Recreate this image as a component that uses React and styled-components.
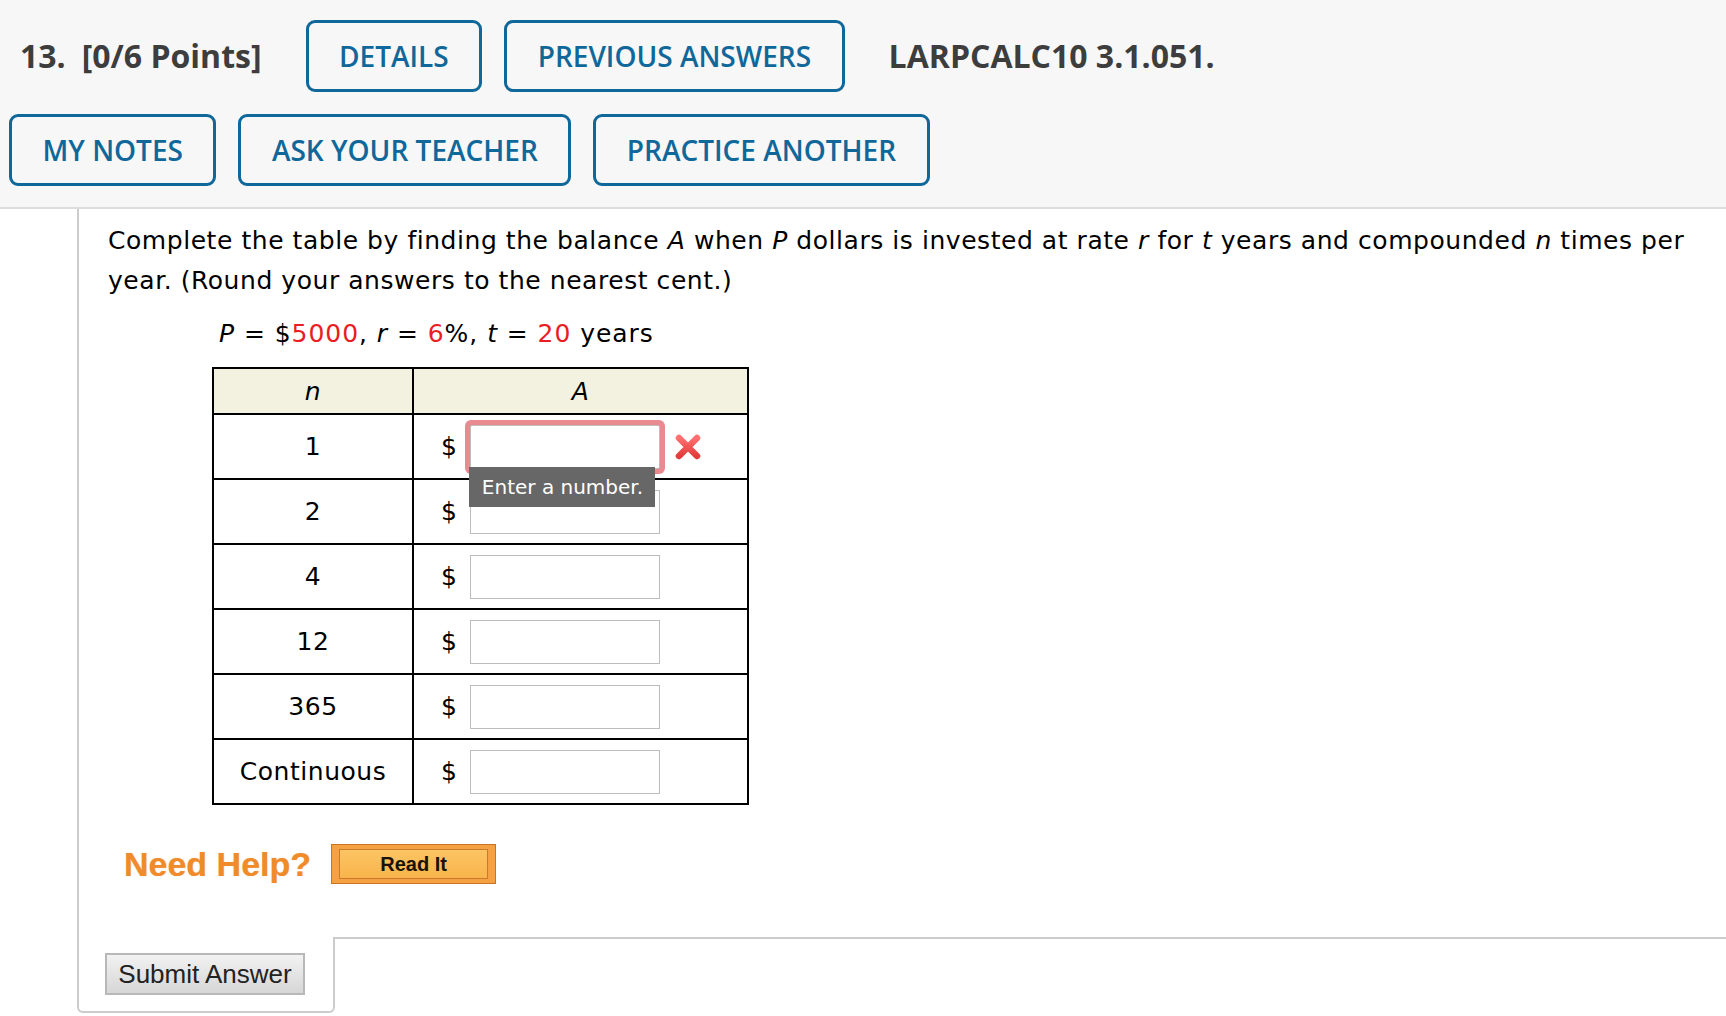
import React from 'react';
import styled, { createGlobalStyle } from 'styled-components';

const GlobalStyle = createGlobalStyle`
  html, body {
    margin: 0;
    padding: 0;
    background: #ffffff;
  }
  body {
    font-family: "DejaVu Sans", Verdana, sans-serif;
    color: #000000;
  }
  * {
    box-sizing: border-box;
  }
`;

const BLUE = '#10679a';

const Header = styled.div`
  background: #f7f7f7;
  border-bottom: 2px solid #dddddd;
  padding: 20px 0 21px 9px;
  display: flex;
  flex-direction: column;
  gap: 22px;
`;

const HeaderRow = styled.div`
  display: flex;
  align-items: center;
  gap: 22px;
  padding-left: ${(props) => props.indent || 0}px;
`;

const Title = styled.div`
  font-family: "Open Sans", sans-serif;
  font-weight: 700;
  font-size: 32px;
  color: #3d3d3d;
  line-height: 1;
  margin-right: ${(props) => props.after || 0}px;
  margin-left: ${(props) => props.before || 0}px;

  span {
    margin-left: 16px;
  }
`;

const ActionButton = styled.button`
  height: 72px;
  padding: 0 30.5px;
  border: 3px solid ${BLUE};
  border-radius: 9px;
  background: transparent;
  color: ${BLUE};
  font-family: "Open Sans", sans-serif;
  font-weight: 600;
  font-size: 28px;
  line-height: 1;
  display: flex;
  align-items: center;
  cursor: pointer;
`;

const Content = styled.div`
  margin-left: 77px;
  border-left: 2px solid #cccccc;
  padding: 12px 20px 53px 29px;
  letter-spacing: 0.55px;
`;

const Question = styled.p`
  margin: 0;
  font-size: 25px;
  line-height: 40px;
`;

const Formula = styled.div`
  margin-top: 13px;
  padding-left: 111px;
  font-size: 25px;
  line-height: 40px;
  letter-spacing: 0.95px;
`;

const Var = styled.i`
  font-style: italic;
`;

const Given = styled.span`
  color: #ea1c24;
`;

const Table = styled.table`
  margin-top: 13px;
  margin-left: 104px;
  border-collapse: collapse;
  border: 2px solid #000000;
`;

const HeadCell = styled.th`
  background: #f3f1e0;
  border: 2px solid #000000;
  height: 46px;
  padding: 0;
  font-weight: 400;
  font-style: italic;
  font-size: 25px;
  width: ${(props) => props.w}px;
`;

const Cell = styled.td`
  border: 2px solid #000000;
  height: 65px;
  padding: 0 0 0 ${(props) => (props.answer ? 27 : 0)}px;
  text-align: ${(props) => (props.answer ? 'left' : 'center')};
  font-size: 25px;
`;

const AnswerLine = styled.div`
  display: flex;
  align-items: center;
  gap: 13px;
`;

const InputWrap = styled.div`
  position: relative;
  display: flex;
`;

const AnswerInput = styled.input`
  width: 190px;
  height: 44px;
  border: 1px solid #bdbdbd;
  border-radius: ${(props) => (props.error ? 2 : 0)}px;
  background: #ffffff;
  font-size: 22px;
  font-family: "DejaVu Sans", Verdana, sans-serif;
  padding: 0 6px;
  outline: none;
  box-shadow: ${(props) => (props.error ? '0 0 0 5px #e98a91' : 'none')};
`;

const Tooltip = styled.div`
  position: absolute;
  left: -1px;
  top: 42px;
  width: 186px;
  height: 40px;
  background: #676767;
  color: #ffffff;
  font-size: 20px;
  letter-spacing: 0;
  display: flex;
  align-items: center;
  justify-content: center;
  z-index: 2;
`;

const ErrorMark = styled.svg`
  width: 28px;
  height: 28px;
  margin-left: 1px;
`;

const NeedHelpRow = styled.div`
  margin-top: 39px;
  padding-left: 16px;
  display: flex;
  align-items: center;
  gap: 20px;
  letter-spacing: 0;
`;

const NeedHelp = styled.span`
  font-family: "Liberation Sans", Arial, sans-serif;
  font-weight: 700;
  font-size: 34px;
  color: #f08b2c;
  text-shadow: 0 0 1px rgba(240, 139, 44, 0.6);
`;

const ReadItButton = styled.button`
  width: 165px;
  height: 40px;
  padding: 4px 7px;
  border: 1px solid #c9741f;
  background: #f4a043;
  display: flex;
  cursor: pointer;
`;

const ReadItFace = styled.span`
  flex: 1;
  border: 1px solid #c87a2e;
  background: linear-gradient(#fcc463, #f9b44c);
  font-family: "Liberation Sans", Arial, sans-serif;
  font-weight: 700;
  font-size: 20px;
  color: #1a1208;
  display: flex;
  align-items: center;
  justify-content: center;
`;

const Footer = styled.div`
  margin-left: 77px;
  display: flex;
`;

const SubmitTab = styled.div`
  width: 258px;
  border: 2px solid #cccccc;
  border-top: none;
  border-radius: 0 0 6px 6px;
  padding: 16px 0 16px 26px;
`;

const Filler = styled.div`
  flex: 1;
  border-top: 2px solid #cccccc;
`;

const SubmitButton = styled.button`
  width: 200px;
  height: 42px;
  border: 2px solid #b8b8b8;
  background: linear-gradient(#f2f2f2, #d6d6d6);
  font-family: "Liberation Sans", Arial, sans-serif;
  font-size: 26px;
  color: #222222;
  padding: 0;
  cursor: pointer;
`;

const rows = ['1', '2', '4', '12', '365', 'Continuous'];

const XIcon = () => (
  <ErrorMark viewBox="0 0 28 28">
    <defs>
      <linearGradient id="xg" x1="0" y1="0" x2="0" y2="1">
        <stop offset="0" stopColor="#ff7070" />
        <stop offset="1" stopColor="#e33b3b" />
      </linearGradient>
    </defs>
    <path
      d="M5 5 L23 23 M23 5 L5 23"
      stroke="url(#xg)"
      strokeWidth="6.5"
      strokeLinecap="round"
      fill="none"
    />
  </ErrorMark>
);

const App = () => {
  return (
    <>
      <GlobalStyle />
      <Header>
        <HeaderRow indent={11}>
          <Title after={22}>
            13.<span>[0/6 Points]</span>
          </Title>
          <ActionButton>DETAILS</ActionButton>
          <ActionButton>PREVIOUS ANSWERS</ActionButton>
          <Title before={22}>LARPCALC10 3.1.051.</Title>
        </HeaderRow>
        <HeaderRow>
          <ActionButton>MY NOTES</ActionButton>
          <ActionButton>ASK YOUR TEACHER</ActionButton>
          <ActionButton>PRACTICE ANOTHER</ActionButton>
        </HeaderRow>
      </Header>

      <Content>
        <Question>
          Complete the table by finding the balance <Var>A</Var> when <Var>P</Var> dollars
          is invested at rate <Var>r</Var> for <Var>t</Var> years and compounded{' '}
          <Var>n</Var> times per year. (Round your answers to the nearest cent.)
        </Question>
        <Formula>
          <Var>P</Var> = $<Given>5000</Given>, <Var>r</Var> = <Given>6</Given>%,{' '}
          <Var>t</Var> = <Given>20</Given> years
        </Formula>

        <Table>
          <thead>
            <tr>
              <HeadCell w={200}>n</HeadCell>
              <HeadCell w={335}>A</HeadCell>
            </tr>
          </thead>
          <tbody>
            {rows.map((n, index) => (
              <tr key={n}>
                <Cell>{n}</Cell>
                <Cell answer>
                  <AnswerLine>
                    <span>$</span>
                    <InputWrap>
                      <AnswerInput error={index === 0} />
                      {index === 0 && <Tooltip>Enter a number.</Tooltip>}
                    </InputWrap>
                    {index === 0 && <XIcon />}
                  </AnswerLine>
                </Cell>
              </tr>
            ))}
          </tbody>
        </Table>

        <NeedHelpRow>
          <NeedHelp>Need Help?</NeedHelp>
          <ReadItButton>
            <ReadItFace>Read It</ReadItFace>
          </ReadItButton>
        </NeedHelpRow>
      </Content>

      <Footer>
        <SubmitTab>
          <SubmitButton>Submit Answer</SubmitButton>
        </SubmitTab>
        <Filler />
      </Footer>
    </>
  );
};

export default App;
